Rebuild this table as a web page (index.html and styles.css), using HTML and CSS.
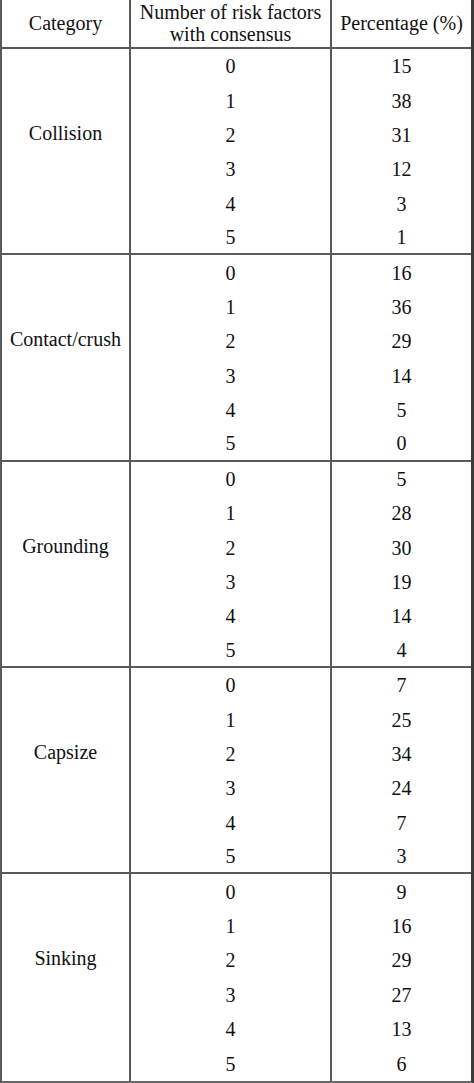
FILE: index.html
```html
<!DOCTYPE html>
<html>
<head>
<meta charset="utf-8">
<link rel="stylesheet" href="styles.css">
</head>
<body>
<table class="tbl">
<colgroup><col class="c1"><col class="c2"><col class="c3"></colgroup>
<thead>
<tr class="head"><th>Category</th><th>Number of risk factors<br>with consensus</th><th class="last">Percentage (%)</th></tr>
</thead>
<tbody>
<tr><td class="cat" rowspan="6">Collision</td><td>0</td><td class="last">15</td></tr>
<tr><td>1</td><td class="last">38</td></tr>
<tr><td>2</td><td class="last">31</td></tr>
<tr><td>3</td><td class="last">12</td></tr>
<tr><td>4</td><td class="last">3</td></tr>
<tr class="end"><td>5</td><td class="last">1</td></tr>
</tbody>
<tbody>
<tr><td class="cat" rowspan="6">Contact/crush</td><td>0</td><td class="last">16</td></tr>
<tr><td>1</td><td class="last">36</td></tr>
<tr><td>2</td><td class="last">29</td></tr>
<tr><td>3</td><td class="last">14</td></tr>
<tr><td>4</td><td class="last">5</td></tr>
<tr class="end"><td>5</td><td class="last">0</td></tr>
</tbody>
<tbody>
<tr><td class="cat" rowspan="6">Grounding</td><td>0</td><td class="last">5</td></tr>
<tr><td>1</td><td class="last">28</td></tr>
<tr><td>2</td><td class="last">30</td></tr>
<tr><td>3</td><td class="last">19</td></tr>
<tr><td>4</td><td class="last">14</td></tr>
<tr class="end"><td>5</td><td class="last">4</td></tr>
</tbody>
<tbody>
<tr><td class="cat" rowspan="6">Capsize</td><td>0</td><td class="last">7</td></tr>
<tr><td>1</td><td class="last">25</td></tr>
<tr><td>2</td><td class="last">34</td></tr>
<tr><td>3</td><td class="last">24</td></tr>
<tr><td>4</td><td class="last">7</td></tr>
<tr class="end"><td>5</td><td class="last">3</td></tr>
</tbody>
<tbody>
<tr><td class="cat" rowspan="6">Sinking</td><td>0</td><td class="last">9</td></tr>
<tr><td>1</td><td class="last">16</td></tr>
<tr><td>2</td><td class="last">29</td></tr>
<tr><td>3</td><td class="last">27</td></tr>
<tr><td>4</td><td class="last">13</td></tr>
<tr class="end final"><td>5</td><td class="last">6</td></tr>
</tbody>
</table>
</body>
</html>
```
FILE: styles.css
```css
html, body {
  margin: 0;
  padding: 0;
  background: #ffffff;
}

.tbl {
  width: 474px;
  table-layout: fixed;
  border-collapse: separate;
  border-spacing: 0;
  border-left: 2px solid #5a5a5a;
  border-right: 3px solid #3a3a3a;
  border-bottom: 3px solid #686868;
  color: #111111;
}

.tbl th,
.tbl td {
  font-family: "Liberation Serif", Tinos, "Times New Roman", Times, "Nimbus Roman", "DejaVu Serif", serif;
  font-size: 20px;
  padding: 0;
  text-align: center;
  vertical-align: middle;
  font-weight: normal;
  border-right: 2px solid #5a5a5a;
  line-height: 22px;
}

.c1 { width: 129px; }
.c2 { width: 201px; }
.c3 { width: 139px; }

.tbl .last {
  border-right: none;
}

.head {
  height: 49px;
}

.head th {
  border-bottom: 2px solid #5a5a5a;
  padding-bottom: 2px;
}

.tbl tbody tr {
  height: 34.4px;
}

.tbl td.cat {
  vertical-align: top;
  padding-top: 73px;
  border-bottom: 2px solid #5a5a5a;
}

.tbl tr.end td {
  border-bottom: 2px solid #5a5a5a;
}

.tbl tr.final td,
.tbl tbody:last-child td.cat {
  border-bottom: none;
}
```
